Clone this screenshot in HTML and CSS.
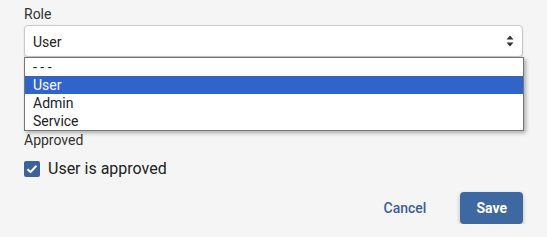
FILE: index.html
```
<!DOCTYPE html>
<html lang="en">
<head>
    <meta charset="UTF-8">
    <meta name="viewport" content="width=device-width, initial-scale=1.0">
    <title>Edit user</title>
    <link rel="stylesheet" href="styles.css">
</head>
<body>
    <form class="form">
        <div class="field">
            <label class="label">Role</label>
            <div class="select-wrap">
                <div class="select">
                    <span>User</span>
                    <svg class="arrows" width="8" height="12" viewBox="0 0 8 12">
                        <path d="M4 0.5 L7.5 4.5 H0.5 Z" fill="#333"/>
                        <path d="M4 11.5 L7.5 7.5 H0.5 Z" fill="#333"/>
                    </svg>
                </div>
                <ul class="options">
                    <li>- - -</li>
                    <li class="selected">User</li>
                    <li>Admin</li>
                    <li>Service</li>
                </ul>
            </div>
        </div>

        <div class="field approved">
            <label class="label">Approved</label>
            <label class="check-row">
                <span class="checkbox">
                    <svg width="12" height="10" viewBox="0 0 12 10">
                        <path d="M1.5 5.2 L4.5 8 L10.5 1.8" fill="none" stroke="#fff" stroke-width="2"/>
                    </svg>
                </span>
                User is approved
            </label>
        </div>

        <div class="actions">
            <button type="button" class="btn cancel">Cancel</button>
            <button type="button" class="btn save">Save</button>
        </div>
    </form>
</body>
</html>
```

FILE: styles.css
```
* {
    margin: 0;
    padding: 0;
    box-sizing: border-box;
    font-family: Roboto, "Liberation Sans", Arial, sans-serif;
}
body {
    background-color: #f5f5f5;
    color: #333;
}
.form {
    padding: 4px 24px 0;
}
.label {
    display: block;
    font-size: 14px;
    line-height: 20px;
    margin-bottom: 1px;
}

/* select */
.select-wrap {
    position: relative;
}
.select {
    height: 32px;
    background-color: #fff;
    border: 1px solid #c8c8c8;
    border-radius: 4px;
    box-shadow: 0 1px 2px rgba(0, 0, 0, .12);
    display: flex;
    align-items: center;
    justify-content: space-between;
    padding: 0 8px;
    font-size: 14px;
    color: #222;
}
.select span {
    padding-top: 1px;
}
.options {
    position: absolute;
    top: 32px;
    left: 0;
    right: -1px;
    list-style: none;
    background-color: #fff;
    border: 1px solid #777;
    box-shadow: 2px 2px 4px rgba(0, 0, 0, .3);
    z-index: 2;
}
.options li {
    height: 18px;
    line-height: 18px;
    padding: 0 8px;
    font-size: 14px;
    color: #222;
}
.options li.selected {
    background-color: #3164c9;
    color: #fff;
}

/* approved */
.approved {
    margin-top: 73px;
}
.check-row {
    display: flex;
    align-items: center;
    gap: 8px;
    margin-top: 7px;
    font-size: 16px;
    line-height: 24px;
    color: #222;
}
.checkbox {
    width: 16px;
    height: 16px;
    border-radius: 2px;
    background-color: #3c629b;
    display: flex;
    align-items: center;
    justify-content: center;
}

/* buttons */
.actions {
    display: flex;
    justify-content: flex-end;
    gap: 18px;
    margin-top: 11px;
}
.btn {
    height: 32px;
    padding: 0 16px;
    border: none;
    border-radius: 4px;
    font-size: 14px;
    cursor: pointer;
    background: none;
}
.cancel {
    color: #3d5f94;
    font-weight: 500;
}
.save {
    background-color: #3e68a2;
    color: #fff;
    font-weight: 700;
    box-shadow: 0 2px 4px rgba(0, 0, 0, .25);
}
```
